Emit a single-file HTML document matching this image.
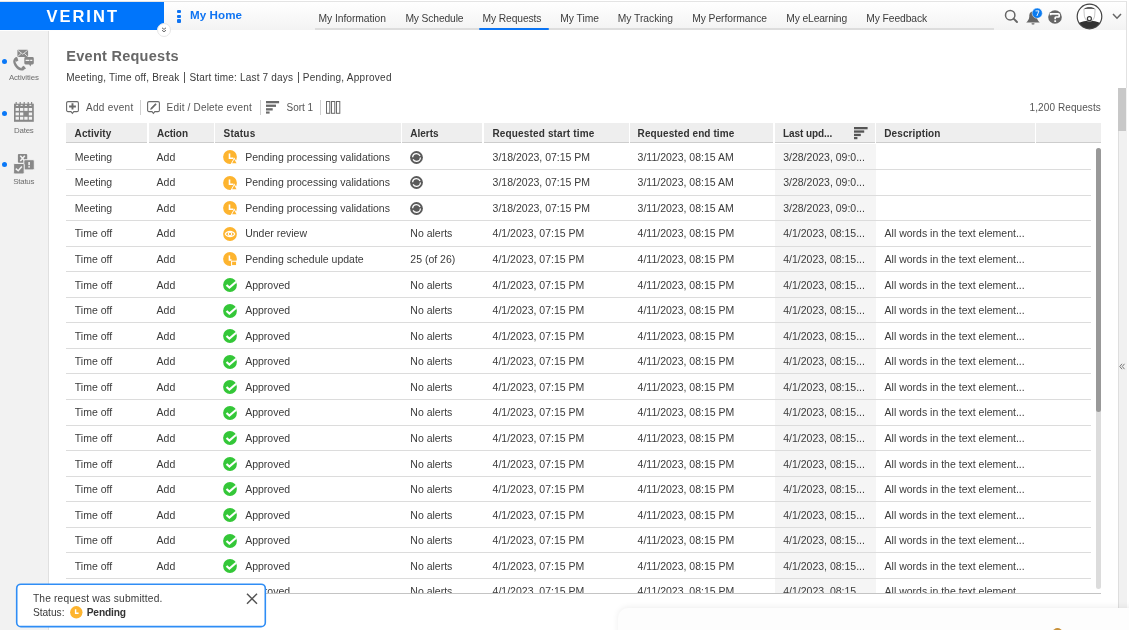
<!DOCTYPE html>
<html><head><meta charset="utf-8">
<style>
html,body{margin:0;padding:0;}
body{width:1129px;height:630px;overflow:hidden;position:relative;background:#fff;font-family:"Liberation Sans",sans-serif;}
.a{position:absolute;}
.t{position:absolute;white-space:pre;line-height:1;font-family:"Liberation Sans",sans-serif;}
.rb{position:absolute;left:66px;width:1025px;height:1px;background:#dcdcdc;}
.hc{position:absolute;top:123.3px;height:19px;background:#eeeeee;border-bottom:1px solid #cdcdcd;}
svg{position:absolute;overflow:visible;}
</style></head><body>
<div id="root" style="position:absolute;left:0;top:0;width:1129px;height:630px;overflow:hidden;will-change:transform">
<!-- top frame line -->
<div class="a" style="left:0;top:0;width:1129px;height:1px;background:#fff"></div>
<div class="a" style="left:0;top:1px;width:1127px;height:1px;background:#e4e4e4"></div>
<!-- header -->
<div class="a" style="left:0;top:2px;width:1126px;height:28px;background:linear-gradient(#ffffff,#f3f3f3)"></div>
<div class="a" style="left:0;top:2px;width:164px;height:28px;background:#0075fb"></div>
<!-- nav underline -->
<div class="a" style="left:315px;top:28px;width:679px;height:2px;background:#dddddd"></div>
<div class="a" style="left:479px;top:27.5px;width:70px;height:2.5px;background:#0a74f4;border-radius:1px"></div>
<!-- kebab -->
<div class="a" style="left:177px;top:9.5px;width:3.8px;height:3.6px;background:#0f74f2;border-radius:1px"></div>
<div class="a" style="left:177px;top:14.5px;width:3.8px;height:3.6px;background:#0f74f2;border-radius:1px"></div>
<div class="a" style="left:177px;top:19.3px;width:3.8px;height:3.6px;background:#0f74f2;border-radius:1px"></div>
<!-- right frame line -->
<div class="a" style="left:1126px;top:1px;width:1px;height:607px;background:#e2e2e2"></div>
<!-- sidebar -->
<div class="a" style="left:0;top:31px;width:48px;height:599px;background:#f2f2f2;border-right:1px solid #e0e0e0"></div>
<!-- collapse circle -->
<div class="a" style="left:157px;top:23px;width:12px;height:12px;border-radius:50%;background:#fff;border:1px solid #e6e6e6"></div>
<svg style="left:160px;top:26.3px" width="8" height="8" viewBox="0 0 8 8"><path d="M2 1.8 L4 3.4 L6 1.8 M2 4.2 L4 5.8 L6 4.2" fill="none" stroke="#555" stroke-width="0.9"/></svg>

<span class="t" style="left:46.40px;top:8.00px;font-size:16.5px;font-weight:700;color:#fff;letter-spacing:2.017px;">VERINT</span>
<span class="t" style="left:190.00px;top:9.00px;font-size:11.6px;font-weight:700;color:#0f74f2;letter-spacing:0.076px;">My Home</span>
<span class="t" style="left:318.60px;top:14.00px;font-size:10.3px;color:#3d3d3d;letter-spacing:-0.055px;">My Information</span>
<span class="t" style="left:405.40px;top:14.00px;font-size:10.3px;color:#3d3d3d;letter-spacing:-0.133px;">My Schedule</span>
<span class="t" style="left:482.50px;top:14.00px;font-size:10.3px;color:#3d3d3d;letter-spacing:-0.109px;">My Requests</span>
<span class="t" style="left:560.30px;top:14.00px;font-size:10.3px;color:#3d3d3d;letter-spacing:-0.051px;">My Time</span>
<span class="t" style="left:617.70px;top:14.00px;font-size:10.3px;color:#3d3d3d;letter-spacing:-0.022px;">My Tracking</span>
<span class="t" style="left:692.20px;top:14.00px;font-size:10.3px;color:#3d3d3d;letter-spacing:-0.057px;">My Performance</span>
<span class="t" style="left:786.30px;top:14.00px;font-size:10.3px;color:#3d3d3d;letter-spacing:-0.136px;">My eLearning</span>
<span class="t" style="left:866.20px;top:14.00px;font-size:10.3px;color:#3d3d3d;letter-spacing:-0.081px;">My Feedback</span>
<span class="t" style="left:66.30px;top:49.00px;font-size:14.5px;font-weight:700;color:#676767;letter-spacing:0.269px;">Event Requests</span>
<span class="t" style="left:66.30px;top:73.00px;font-size:10px;color:#3a3a3a;letter-spacing:0.204px;">Meeting, Time off, Break</span>
<span class="t" style="left:189.40px;top:73.00px;font-size:10px;color:#3a3a3a;letter-spacing:0.186px;">Start time: Last 7 days</span>
<span class="t" style="left:302.80px;top:73.00px;font-size:10px;color:#3a3a3a;letter-spacing:0.262px;">Pending, Approved</span>
<span class="t" style="left:8.90px;top:74.00px;font-size:7.9px;color:#6e6e6e;letter-spacing:-0.127px;">Activities</span>
<span class="t" style="left:14.00px;top:127.00px;font-size:7.9px;color:#6e6e6e;letter-spacing:-0.206px;">Dates</span>
<span class="t" style="left:13.20px;top:178.00px;font-size:7.9px;color:#6e6e6e;letter-spacing:-0.215px;">Status</span>
<span class="t" style="left:86.00px;top:103.00px;font-size:10px;color:#555;letter-spacing:0.269px;">Add event</span>
<span class="t" style="left:166.60px;top:103.00px;font-size:10px;color:#555;letter-spacing:0.193px;">Edit / Delete event</span>
<span class="t" style="left:286.60px;top:103.00px;font-size:10px;color:#555;letter-spacing:-0.058px;">Sort 1</span>
<span class="t" style="left:1029.60px;top:103.00px;font-size:10px;color:#555;letter-spacing:0.088px;">1,200 Requests</span>
<svg style="left:1003.00px;top:8.00px" width="16" height="16" viewBox="0 0 16 16"><circle cx="7.2" cy="7.2" r="4.7" fill="none" stroke="#666" stroke-width="1.5"/><path d="M10.6 10.6L14 14" stroke="#666" stroke-width="1.9" stroke-linecap="round"/></svg>
<svg style="left:1025.00px;top:9.00px" width="16" height="16" viewBox="0 0 16 16"><path d="M8 2.5C5 2.5 4.3 5 4.3 7.5C4.3 10.5 2.6 12 1.2 13.6H14.8C13.4 12 11.7 10.5 11.7 7.5C11.7 5 11 2.5 8 2.5Z" fill="#666"/><path d="M6.6 14.2H9.4V15C9.4 15.4 8.8 15.5 8 15.5C7.2 15.5 6.6 15.4 6.6 15Z" fill="#666"/></svg>
<svg style="left:1032.00px;top:7.80px" width="11" height="11" viewBox="0 0 11 11"><circle cx="5.2" cy="5.2" r="5.1" fill="#0a7bf0" stroke="#fff" stroke-width="0.5"/><path d="M3.5 2.9H7L4.9 8" fill="none" stroke="#fff" stroke-width="0.9"/></svg>
<svg style="left:1047.50px;top:9.90px" width="14" height="14" viewBox="0 0 14 14"><circle cx="7" cy="7" r="6.8" fill="#666"/><path d="M2.6 5.2V3.8H10.2Q11.2 3.8 11.2 4.8V6.2Q11.2 7 10.4 7H8Q7.2 7 7.2 7.8V9.2" fill="none" stroke="#fff" stroke-width="1.7"/><rect x="6.3" y="10.3" width="1.8" height="1.7" fill="#fff"/></svg>
<svg style="left:1076.00px;top:2.50px" width="27" height="27" viewBox="0 0 27 27"><defs><clipPath id="avc"><circle cx="13.5" cy="13.5" r="12.3"/></clipPath></defs><circle cx="13.5" cy="13.5" r="12.3" fill="#fff"/><g clip-path="url(#avc)"><path d="M0 22.8C3 16.2 24 16.2 27 22.8V28H0Z" fill="#333"/><path d="M7.9 6.2C7.9 4.2 19.1 4.2 19.1 6.2L18.7 12.2C18.3 16.2 16 18.6 13.5 18.6C11 18.6 8.7 16.2 8.3 12.2Z" fill="#fff" stroke="#8a8a8a" stroke-width="0.5"/><path d="M8.2 6.2C9.8 3.6 17.2 3.6 18.7 6.2C16.2 5.6 10.6 5.6 8.2 6.2Z" fill="#3a3a3a"/><circle cx="13.4" cy="15.7" r="2" fill="#fff" stroke="#3a3a3a" stroke-width="1.2"/></g><circle cx="13.5" cy="13.5" r="12.3" fill="none" stroke="#444" stroke-width="1.2"/></svg>
<svg style="left:1112.00px;top:13.00px" width="10" height="7" viewBox="0 0 10 7"><path d="M1 1L5 5.2L9 1" fill="none" stroke="#666" stroke-width="1.5"/></svg>
<svg style="left:66.00px;top:101.00px" width="13" height="13" viewBox="0 0 13 13"><path d="M2 0.6H11A1.4 1.4 0 0 1 12.4 2V9.2A1.4 1.4 0 0 1 11 10.6H7.8L6.4 12.3L5 10.6H2A1.4 1.4 0 0 1 0.6 9.2V2A1.4 1.4 0 0 1 2 0.6Z" fill="none" stroke="#6a6a6a" stroke-width="1.1"/><path d="M6.5 2.3V8.6M3.1 5.5H9.9" stroke="#6a6a6a" stroke-width="1.9"/></svg>
<svg style="left:146.80px;top:101.00px" width="13" height="13" viewBox="0 0 13 13"><path d="M2 0.6H11A1.4 1.4 0 0 1 12.4 2V9.2A1.4 1.4 0 0 1 11 10.6H7.8L6.4 12.3L5 10.6H2A1.4 1.4 0 0 1 0.6 9.2V2A1.4 1.4 0 0 1 2 0.6Z" fill="none" stroke="#6a6a6a" stroke-width="1.1"/><path d="M3.6 8.4L4 7L8.4 2.6L9.3 3.5L4.9 7.9Z" fill="#6a6a6a" stroke="#6a6a6a" stroke-width="0.6"/></svg>
<svg style="left:266.20px;top:101.30px" width="14" height="13" viewBox="0 0 14 13"><rect x="0" y="0" width="13.1" height="2.3" fill="#6a6a6a"/><rect x="0" y="3.6" width="10" height="2.3" fill="#6a6a6a"/><rect x="0" y="7.2" width="6.7" height="2.3" fill="#6a6a6a"/><rect x="0" y="10.5" width="3.6" height="2.1" fill="#6a6a6a"/></svg>
<svg style="left:326.00px;top:101.00px" width="15" height="13" viewBox="0 0 15 13"><rect x="0.5" y="0.5" width="3.3" height="11.8" fill="none" stroke="#6a6a6a" stroke-width="1"/><rect x="5.5" y="0.5" width="3.3" height="11.8" fill="none" stroke="#6a6a6a" stroke-width="1"/><rect x="10.5" y="0.5" width="3.3" height="11.8" fill="none" stroke="#6a6a6a" stroke-width="1"/></svg>
<div class="a" style="left:140.1px;top:100px;width:1px;height:15px;background:#d0d0d0"></div>
<div class="a" style="left:259.9px;top:100px;width:1px;height:15px;background:#d0d0d0"></div>
<div class="a" style="left:319.7px;top:100px;width:1px;height:15px;background:#d0d0d0"></div>
<div class="a" style="left:183.8px;top:72.4px;width:1px;height:11px;background:#555"></div>
<div class="a" style="left:297.8px;top:72.4px;width:1px;height:11px;background:#555"></div>
<div class="a" style="left:1.5px;top:59.2px;width:5px;height:5px;border-radius:50%;background:#0a78f7"></div>
<div class="a" style="left:1.5px;top:111.1px;width:5px;height:5px;border-radius:50%;background:#0a78f7"></div>
<div class="a" style="left:1.5px;top:161.9px;width:5px;height:5px;border-radius:50%;background:#0a78f7"></div>
<svg style="left:0;top:0" width="48" height="200" viewBox="0 0 48 200"><rect x="17.4" y="49.8" width="10.7" height="7.1" rx="0.8" fill="#888888"/><path d="M17.9 50.4L22.75 54.2L27.6 50.4M17.9 56.4L21.2 53.4M27.6 56.4L24.3 53.4" fill="none" stroke="#f2f2f2" stroke-width="0.8"/><path d="M25.6 57.1H32.4Q33.8 57.1 33.8 58.5V63.1Q33.8 64.5 32.4 64.5H31.3L30.3 66.4L29.2 64.5H25.6Q24.3 64.5 24.3 63.1V58.5Q24.3 57.1 25.6 57.1Z" fill="#888888"/><path d="M25.6 60.4H29.4M30.2 60.4H32.3" stroke="#f2f2f2" stroke-width="1.1"/><path d="M16.2 58.2C14 59.6 13.8 62.2 15.6 65C17.4 67.8 20.2 69.6 22.6 69.3" fill="none" stroke="#888888" stroke-width="2.4" stroke-linecap="round"/><path d="M14.6 58.4L17 57.2L18.4 60.6L16.2 61.8Z" fill="#888888"/><path d="M21.4 67.2L23.8 65.8L26 68.4L23.4 70Z" fill="#888888"/><rect x="14" y="103.7" width="19.8" height="18.1" fill="#888888"/><rect x="15.6" y="102" width="1.2" height="2.4" fill="#888888"/><rect x="19.6" y="102" width="1.2" height="2.4" fill="#888888"/><rect x="23.6" y="102" width="1.2" height="2.4" fill="#888888"/><rect x="27.6" y="102" width="1.2" height="2.4" fill="#888888"/><rect x="31.0" y="102" width="1.2" height="2.4" fill="#888888"/><rect x="16.2" y="104.9" width="2" height="1" fill="#f2f2f2"/><rect x="15.6" y="108" width="3.3" height="2.9" fill="#f2f2f2"/><rect x="15.6" y="112.5" width="3.3" height="2.9" fill="#f2f2f2"/><rect x="15.6" y="116.8" width="3.3" height="2.9" fill="#f2f2f2"/><rect x="20.6" y="104.9" width="2" height="1" fill="#f2f2f2"/><rect x="20.0" y="108" width="3.3" height="2.9" fill="#f2f2f2"/><rect x="20.0" y="112.5" width="3.3" height="2.9" fill="#f2f2f2"/><rect x="20.0" y="116.8" width="3.3" height="2.9" fill="#f2f2f2"/><rect x="24.9" y="104.9" width="2" height="1" fill="#f2f2f2"/><rect x="24.3" y="108" width="3.3" height="2.9" fill="#f2f2f2"/><rect x="24.3" y="116.8" width="3.3" height="2.9" fill="#f2f2f2"/><rect x="29.4" y="104.9" width="2" height="1" fill="#f2f2f2"/><rect x="28.8" y="108" width="3.3" height="2.9" fill="#f2f2f2"/><rect x="28.8" y="112.5" width="3.3" height="2.9" fill="#f2f2f2"/><rect x="28.8" y="116.8" width="3.3" height="2.9" fill="#f2f2f2"/><rect x="17.9" y="154.1" width="9.3" height="8.6" rx="1" fill="#888888"/><path d="M20.3 155.8L24.8 161M24.8 155.8L20.3 161" stroke="#f2f2f2" stroke-width="1.5"/><rect x="23.8" y="159.7" width="10.5" height="10.2" rx="1.2" fill="#888888" stroke="#f2f2f2" stroke-width="1"/><rect x="28.3" y="162" width="1.6" height="3.2" fill="#f2f2f2"/><rect x="28.3" y="166.1" width="1.6" height="1.5" fill="#f2f2f2"/><rect x="13.6" y="163.5" width="10.6" height="10.5" rx="1.2" fill="#888888" stroke="#f2f2f2" stroke-width="1"/><path d="M15.8 168.6L18.2 170.8L21.9 166.6" fill="none" stroke="#f2f2f2" stroke-width="1.5"/></svg>


<!-- table header cells -->
<div class="hc" style="left:66px;width:81px"></div>
<div class="hc" style="left:148.5px;width:65px"></div>
<div class="hc" style="left:215px;width:185.5px"></div>
<div class="hc" style="left:401.7px;width:80.8px"></div>
<div class="hc" style="left:484px;width:144.5px"></div>
<div class="hc" style="left:630px;width:143px"></div>
<div class="hc" style="left:775px;width:99.5px"></div>
<div class="hc" style="left:876px;width:158.5px"></div>
<div class="hc" style="left:1036px;width:65px"></div>

<span class="t" style="left:74.60px;top:129.00px;font-size:10px;font-weight:700;color:#333;letter-spacing:0.068px;">Activity</span>
<span class="t" style="left:157.10px;top:129.00px;font-size:10px;font-weight:700;color:#333;letter-spacing:-0.042px;">Action</span>
<span class="t" style="left:223.60px;top:129.00px;font-size:10px;font-weight:700;color:#333;letter-spacing:0.207px;">Status</span>
<span class="t" style="left:410.30px;top:129.00px;font-size:10px;font-weight:700;color:#333;">Alerts</span>
<span class="t" style="left:492.50px;top:129.00px;font-size:10px;font-weight:700;color:#333;letter-spacing:0.151px;">Requested start time</span>
<span class="t" style="left:637.60px;top:129.00px;font-size:10px;font-weight:700;color:#333;letter-spacing:0.098px;">Requested end time</span>
<span class="t" style="left:782.90px;top:129.00px;font-size:10px;font-weight:700;color:#333;letter-spacing:-0.070px;">Last upd...</span>
<span class="t" style="left:884.20px;top:129.00px;font-size:10px;font-weight:700;color:#333;letter-spacing:0.118px;">Description</span>
<svg style="left:854.30px;top:127.10px" width="14" height="13" viewBox="0 0 14 13"><rect x="0" y="0" width="13.6" height="2.3" fill="#555"/><rect x="0" y="3.4" width="10.2" height="2.3" fill="#555"/><rect x="0" y="6.8" width="6.8" height="2.3" fill="#555"/><rect x="0" y="10" width="3.4" height="2.2" fill="#555"/></svg>


<!-- table body -->
<div class="a" style="left:0;top:144px;width:1129px;height:449px;overflow:hidden">
 <div class="a" style="left:774.5px;top:0;width:101px;height:449px;background:#f5f5f5"></div>
 <div class="rb" style="top:25.00px"></div>
<div class="rb" style="top:50.56px"></div>
<div class="rb" style="top:76.12px"></div>
<div class="rb" style="top:101.68px"></div>
<div class="rb" style="top:127.24px"></div>
<div class="rb" style="top:152.80px"></div>
<div class="rb" style="top:178.36px"></div>
<div class="rb" style="top:203.92px"></div>
<div class="rb" style="top:229.48px"></div>
<div class="rb" style="top:255.04px"></div>
<div class="rb" style="top:280.60px"></div>
<div class="rb" style="top:306.16px"></div>
<div class="rb" style="top:331.72px"></div>
<div class="rb" style="top:357.28px"></div>
<div class="rb" style="top:382.84px"></div>
<div class="rb" style="top:408.40px"></div>
<div class="rb" style="top:433.96px"></div>

 <div class="a" style="left:0;top:-144px;width:1129px;height:630px">
 <span class="t" style="left:74.80px;top:152.00px;font-size:10.5px;color:#3b3b3b;">Meeting</span>
<span class="t" style="left:156.60px;top:152.00px;font-size:10.5px;color:#3b3b3b;">Add</span>
<span class="t" style="left:245.20px;top:152.00px;font-size:10.5px;color:#3b3b3b;">Pending processing validations</span>
<span class="t" style="left:492.60px;top:152.00px;font-size:10.5px;color:#3b3b3b;">3/18/2023, 07:15 PM</span>
<span class="t" style="left:637.60px;top:152.00px;font-size:10.5px;color:#3b3b3b;">3/11/2023, 08:15 AM</span>
<span class="t" style="left:783.20px;top:152.00px;font-size:10.5px;color:#3b3b3b;">3/28/2023, 09:0...</span>
<span class="t" style="left:74.80px;top:177.00px;font-size:10.5px;color:#3b3b3b;">Meeting</span>
<span class="t" style="left:156.60px;top:177.00px;font-size:10.5px;color:#3b3b3b;">Add</span>
<span class="t" style="left:245.20px;top:177.00px;font-size:10.5px;color:#3b3b3b;">Pending processing validations</span>
<span class="t" style="left:492.60px;top:177.00px;font-size:10.5px;color:#3b3b3b;">3/18/2023, 07:15 PM</span>
<span class="t" style="left:637.60px;top:177.00px;font-size:10.5px;color:#3b3b3b;">3/11/2023, 08:15 AM</span>
<span class="t" style="left:783.20px;top:177.00px;font-size:10.5px;color:#3b3b3b;">3/28/2023, 09:0...</span>
<span class="t" style="left:74.80px;top:203.00px;font-size:10.5px;color:#3b3b3b;">Meeting</span>
<span class="t" style="left:156.60px;top:203.00px;font-size:10.5px;color:#3b3b3b;">Add</span>
<span class="t" style="left:245.20px;top:203.00px;font-size:10.5px;color:#3b3b3b;">Pending processing validations</span>
<span class="t" style="left:492.60px;top:203.00px;font-size:10.5px;color:#3b3b3b;">3/18/2023, 07:15 PM</span>
<span class="t" style="left:637.60px;top:203.00px;font-size:10.5px;color:#3b3b3b;">3/11/2023, 08:15 AM</span>
<span class="t" style="left:783.20px;top:203.00px;font-size:10.5px;color:#3b3b3b;">3/28/2023, 09:0...</span>
<span class="t" style="left:74.80px;top:228.00px;font-size:10.5px;color:#3b3b3b;">Time off</span>
<span class="t" style="left:156.60px;top:228.00px;font-size:10.5px;color:#3b3b3b;">Add</span>
<span class="t" style="left:245.20px;top:228.00px;font-size:10.5px;color:#3b3b3b;">Under review</span>
<span class="t" style="left:410.30px;top:228.00px;font-size:10.5px;color:#3b3b3b;">No alerts</span>
<span class="t" style="left:492.60px;top:228.00px;font-size:10.5px;color:#3b3b3b;">4/1/2023, 07:15 PM</span>
<span class="t" style="left:637.60px;top:228.00px;font-size:10.5px;color:#3b3b3b;">4/11/2023, 08:15 PM</span>
<span class="t" style="left:783.20px;top:228.00px;font-size:10.5px;color:#3b3b3b;">4/1/2023, 08:15...</span>
<span class="t" style="left:884.60px;top:228.00px;font-size:10.5px;color:#3b3b3b;">All words in the text element...</span>
<span class="t" style="left:74.80px;top:254.00px;font-size:10.5px;color:#3b3b3b;">Time off</span>
<span class="t" style="left:156.60px;top:254.00px;font-size:10.5px;color:#3b3b3b;">Add</span>
<span class="t" style="left:245.20px;top:254.00px;font-size:10.5px;color:#3b3b3b;">Pending schedule update</span>
<span class="t" style="left:410.30px;top:254.00px;font-size:10.5px;color:#3b3b3b;">25 (of 26)</span>
<span class="t" style="left:492.60px;top:254.00px;font-size:10.5px;color:#3b3b3b;">4/1/2023, 07:15 PM</span>
<span class="t" style="left:637.60px;top:254.00px;font-size:10.5px;color:#3b3b3b;">4/11/2023, 08:15 PM</span>
<span class="t" style="left:783.20px;top:254.00px;font-size:10.5px;color:#3b3b3b;">4/1/2023, 08:15...</span>
<span class="t" style="left:884.60px;top:254.00px;font-size:10.5px;color:#3b3b3b;">All words in the text element...</span>
<span class="t" style="left:74.80px;top:280.00px;font-size:10.5px;color:#3b3b3b;">Time off</span>
<span class="t" style="left:156.60px;top:280.00px;font-size:10.5px;color:#3b3b3b;">Add</span>
<span class="t" style="left:245.20px;top:280.00px;font-size:10.5px;color:#3b3b3b;">Approved</span>
<span class="t" style="left:410.30px;top:280.00px;font-size:10.5px;color:#3b3b3b;">No alerts</span>
<span class="t" style="left:492.60px;top:280.00px;font-size:10.5px;color:#3b3b3b;">4/1/2023, 07:15 PM</span>
<span class="t" style="left:637.60px;top:280.00px;font-size:10.5px;color:#3b3b3b;">4/11/2023, 08:15 PM</span>
<span class="t" style="left:783.20px;top:280.00px;font-size:10.5px;color:#3b3b3b;">4/1/2023, 08:15...</span>
<span class="t" style="left:884.60px;top:280.00px;font-size:10.5px;color:#3b3b3b;">All words in the text element...</span>
<span class="t" style="left:74.80px;top:305.00px;font-size:10.5px;color:#3b3b3b;">Time off</span>
<span class="t" style="left:156.60px;top:305.00px;font-size:10.5px;color:#3b3b3b;">Add</span>
<span class="t" style="left:245.20px;top:305.00px;font-size:10.5px;color:#3b3b3b;">Approved</span>
<span class="t" style="left:410.30px;top:305.00px;font-size:10.5px;color:#3b3b3b;">No alerts</span>
<span class="t" style="left:492.60px;top:305.00px;font-size:10.5px;color:#3b3b3b;">4/1/2023, 07:15 PM</span>
<span class="t" style="left:637.60px;top:305.00px;font-size:10.5px;color:#3b3b3b;">4/11/2023, 08:15 PM</span>
<span class="t" style="left:783.20px;top:305.00px;font-size:10.5px;color:#3b3b3b;">4/1/2023, 08:15...</span>
<span class="t" style="left:884.60px;top:305.00px;font-size:10.5px;color:#3b3b3b;">All words in the text element...</span>
<span class="t" style="left:74.80px;top:331.00px;font-size:10.5px;color:#3b3b3b;">Time off</span>
<span class="t" style="left:156.60px;top:331.00px;font-size:10.5px;color:#3b3b3b;">Add</span>
<span class="t" style="left:245.20px;top:331.00px;font-size:10.5px;color:#3b3b3b;">Approved</span>
<span class="t" style="left:410.30px;top:331.00px;font-size:10.5px;color:#3b3b3b;">No alerts</span>
<span class="t" style="left:492.60px;top:331.00px;font-size:10.5px;color:#3b3b3b;">4/1/2023, 07:15 PM</span>
<span class="t" style="left:637.60px;top:331.00px;font-size:10.5px;color:#3b3b3b;">4/11/2023, 08:15 PM</span>
<span class="t" style="left:783.20px;top:331.00px;font-size:10.5px;color:#3b3b3b;">4/1/2023, 08:15...</span>
<span class="t" style="left:884.60px;top:331.00px;font-size:10.5px;color:#3b3b3b;">All words in the text element...</span>
<span class="t" style="left:74.80px;top:356.00px;font-size:10.5px;color:#3b3b3b;">Time off</span>
<span class="t" style="left:156.60px;top:356.00px;font-size:10.5px;color:#3b3b3b;">Add</span>
<span class="t" style="left:245.20px;top:356.00px;font-size:10.5px;color:#3b3b3b;">Approved</span>
<span class="t" style="left:410.30px;top:356.00px;font-size:10.5px;color:#3b3b3b;">No alerts</span>
<span class="t" style="left:492.60px;top:356.00px;font-size:10.5px;color:#3b3b3b;">4/1/2023, 07:15 PM</span>
<span class="t" style="left:637.60px;top:356.00px;font-size:10.5px;color:#3b3b3b;">4/11/2023, 08:15 PM</span>
<span class="t" style="left:783.20px;top:356.00px;font-size:10.5px;color:#3b3b3b;">4/1/2023, 08:15...</span>
<span class="t" style="left:884.60px;top:356.00px;font-size:10.5px;color:#3b3b3b;">All words in the text element...</span>
<span class="t" style="left:74.80px;top:382.00px;font-size:10.5px;color:#3b3b3b;">Time off</span>
<span class="t" style="left:156.60px;top:382.00px;font-size:10.5px;color:#3b3b3b;">Add</span>
<span class="t" style="left:245.20px;top:382.00px;font-size:10.5px;color:#3b3b3b;">Approved</span>
<span class="t" style="left:410.30px;top:382.00px;font-size:10.5px;color:#3b3b3b;">No alerts</span>
<span class="t" style="left:492.60px;top:382.00px;font-size:10.5px;color:#3b3b3b;">4/1/2023, 07:15 PM</span>
<span class="t" style="left:637.60px;top:382.00px;font-size:10.5px;color:#3b3b3b;">4/11/2023, 08:15 PM</span>
<span class="t" style="left:783.20px;top:382.00px;font-size:10.5px;color:#3b3b3b;">4/1/2023, 08:15...</span>
<span class="t" style="left:884.60px;top:382.00px;font-size:10.5px;color:#3b3b3b;">All words in the text element...</span>
<span class="t" style="left:74.80px;top:407.00px;font-size:10.5px;color:#3b3b3b;">Time off</span>
<span class="t" style="left:156.60px;top:407.00px;font-size:10.5px;color:#3b3b3b;">Add</span>
<span class="t" style="left:245.20px;top:407.00px;font-size:10.5px;color:#3b3b3b;">Approved</span>
<span class="t" style="left:410.30px;top:407.00px;font-size:10.5px;color:#3b3b3b;">No alerts</span>
<span class="t" style="left:492.60px;top:407.00px;font-size:10.5px;color:#3b3b3b;">4/1/2023, 07:15 PM</span>
<span class="t" style="left:637.60px;top:407.00px;font-size:10.5px;color:#3b3b3b;">4/11/2023, 08:15 PM</span>
<span class="t" style="left:783.20px;top:407.00px;font-size:10.5px;color:#3b3b3b;">4/1/2023, 08:15...</span>
<span class="t" style="left:884.60px;top:407.00px;font-size:10.5px;color:#3b3b3b;">All words in the text element...</span>
<span class="t" style="left:74.80px;top:433.00px;font-size:10.5px;color:#3b3b3b;">Time off</span>
<span class="t" style="left:156.60px;top:433.00px;font-size:10.5px;color:#3b3b3b;">Add</span>
<span class="t" style="left:245.20px;top:433.00px;font-size:10.5px;color:#3b3b3b;">Approved</span>
<span class="t" style="left:410.30px;top:433.00px;font-size:10.5px;color:#3b3b3b;">No alerts</span>
<span class="t" style="left:492.60px;top:433.00px;font-size:10.5px;color:#3b3b3b;">4/1/2023, 07:15 PM</span>
<span class="t" style="left:637.60px;top:433.00px;font-size:10.5px;color:#3b3b3b;">4/11/2023, 08:15 PM</span>
<span class="t" style="left:783.20px;top:433.00px;font-size:10.5px;color:#3b3b3b;">4/1/2023, 08:15...</span>
<span class="t" style="left:884.60px;top:433.00px;font-size:10.5px;color:#3b3b3b;">All words in the text element...</span>
<span class="t" style="left:74.80px;top:459.00px;font-size:10.5px;color:#3b3b3b;">Time off</span>
<span class="t" style="left:156.60px;top:459.00px;font-size:10.5px;color:#3b3b3b;">Add</span>
<span class="t" style="left:245.20px;top:459.00px;font-size:10.5px;color:#3b3b3b;">Approved</span>
<span class="t" style="left:410.30px;top:459.00px;font-size:10.5px;color:#3b3b3b;">No alerts</span>
<span class="t" style="left:492.60px;top:459.00px;font-size:10.5px;color:#3b3b3b;">4/1/2023, 07:15 PM</span>
<span class="t" style="left:637.60px;top:459.00px;font-size:10.5px;color:#3b3b3b;">4/11/2023, 08:15 PM</span>
<span class="t" style="left:783.20px;top:459.00px;font-size:10.5px;color:#3b3b3b;">4/1/2023, 08:15...</span>
<span class="t" style="left:884.60px;top:459.00px;font-size:10.5px;color:#3b3b3b;">All words in the text element...</span>
<span class="t" style="left:74.80px;top:484.00px;font-size:10.5px;color:#3b3b3b;">Time off</span>
<span class="t" style="left:156.60px;top:484.00px;font-size:10.5px;color:#3b3b3b;">Add</span>
<span class="t" style="left:245.20px;top:484.00px;font-size:10.5px;color:#3b3b3b;">Approved</span>
<span class="t" style="left:410.30px;top:484.00px;font-size:10.5px;color:#3b3b3b;">No alerts</span>
<span class="t" style="left:492.60px;top:484.00px;font-size:10.5px;color:#3b3b3b;">4/1/2023, 07:15 PM</span>
<span class="t" style="left:637.60px;top:484.00px;font-size:10.5px;color:#3b3b3b;">4/11/2023, 08:15 PM</span>
<span class="t" style="left:783.20px;top:484.00px;font-size:10.5px;color:#3b3b3b;">4/1/2023, 08:15...</span>
<span class="t" style="left:884.60px;top:484.00px;font-size:10.5px;color:#3b3b3b;">All words in the text element...</span>
<span class="t" style="left:74.80px;top:510.00px;font-size:10.5px;color:#3b3b3b;">Time off</span>
<span class="t" style="left:156.60px;top:510.00px;font-size:10.5px;color:#3b3b3b;">Add</span>
<span class="t" style="left:245.20px;top:510.00px;font-size:10.5px;color:#3b3b3b;">Approved</span>
<span class="t" style="left:410.30px;top:510.00px;font-size:10.5px;color:#3b3b3b;">No alerts</span>
<span class="t" style="left:492.60px;top:510.00px;font-size:10.5px;color:#3b3b3b;">4/1/2023, 07:15 PM</span>
<span class="t" style="left:637.60px;top:510.00px;font-size:10.5px;color:#3b3b3b;">4/11/2023, 08:15 PM</span>
<span class="t" style="left:783.20px;top:510.00px;font-size:10.5px;color:#3b3b3b;">4/1/2023, 08:15...</span>
<span class="t" style="left:884.60px;top:510.00px;font-size:10.5px;color:#3b3b3b;">All words in the text element...</span>
<span class="t" style="left:74.80px;top:535.00px;font-size:10.5px;color:#3b3b3b;">Time off</span>
<span class="t" style="left:156.60px;top:535.00px;font-size:10.5px;color:#3b3b3b;">Add</span>
<span class="t" style="left:245.20px;top:535.00px;font-size:10.5px;color:#3b3b3b;">Approved</span>
<span class="t" style="left:410.30px;top:535.00px;font-size:10.5px;color:#3b3b3b;">No alerts</span>
<span class="t" style="left:492.60px;top:535.00px;font-size:10.5px;color:#3b3b3b;">4/1/2023, 07:15 PM</span>
<span class="t" style="left:637.60px;top:535.00px;font-size:10.5px;color:#3b3b3b;">4/11/2023, 08:15 PM</span>
<span class="t" style="left:783.20px;top:535.00px;font-size:10.5px;color:#3b3b3b;">4/1/2023, 08:15...</span>
<span class="t" style="left:884.60px;top:535.00px;font-size:10.5px;color:#3b3b3b;">All words in the text element...</span>
<span class="t" style="left:74.80px;top:561.00px;font-size:10.5px;color:#3b3b3b;">Time off</span>
<span class="t" style="left:156.60px;top:561.00px;font-size:10.5px;color:#3b3b3b;">Add</span>
<span class="t" style="left:245.20px;top:561.00px;font-size:10.5px;color:#3b3b3b;">Approved</span>
<span class="t" style="left:410.30px;top:561.00px;font-size:10.5px;color:#3b3b3b;">No alerts</span>
<span class="t" style="left:492.60px;top:561.00px;font-size:10.5px;color:#3b3b3b;">4/1/2023, 07:15 PM</span>
<span class="t" style="left:637.60px;top:561.00px;font-size:10.5px;color:#3b3b3b;">4/11/2023, 08:15 PM</span>
<span class="t" style="left:783.20px;top:561.00px;font-size:10.5px;color:#3b3b3b;">4/1/2023, 08:15...</span>
<span class="t" style="left:884.60px;top:561.00px;font-size:10.5px;color:#3b3b3b;">All words in the text element...</span>
<span class="t" style="left:74.80px;top:586.00px;font-size:10.5px;color:#3b3b3b;">Time off</span>
<span class="t" style="left:156.60px;top:586.00px;font-size:10.5px;color:#3b3b3b;">Add</span>
<span class="t" style="left:245.20px;top:586.00px;font-size:10.5px;color:#3b3b3b;">Approved</span>
<span class="t" style="left:410.30px;top:586.00px;font-size:10.5px;color:#3b3b3b;">No alerts</span>
<span class="t" style="left:492.60px;top:586.00px;font-size:10.5px;color:#3b3b3b;">4/1/2023, 07:15 PM</span>
<span class="t" style="left:637.60px;top:586.00px;font-size:10.5px;color:#3b3b3b;">4/11/2023, 08:15 PM</span>
<span class="t" style="left:783.20px;top:586.00px;font-size:10.5px;color:#3b3b3b;">4/1/2023, 08:15...</span>
<span class="t" style="left:884.60px;top:586.00px;font-size:10.5px;color:#3b3b3b;">All words in the text element...</span>

 <svg style="left:223.00px;top:150.20px" width="14" height="14" viewBox="0 0 14 14"><circle cx="7" cy="7" r="6.9" fill="#fdb42f"/><path d="M6.5 3.5V8.2H10.4" fill="none" stroke="#fff" stroke-width="1.6"/><path d="M11.3 7.4L7.6 14.2H15Z" fill="#fff"/><path d="M11.3 9.2L9.1 13.3H13.5Z" fill="#fdb42f"/></svg>
<svg style="left:410.00px;top:150.50px" width="13" height="13" viewBox="0 0 13 13"><circle cx="6.5" cy="6.5" r="6.4" fill="#5a5a5a"/><circle cx="6.5" cy="6.5" r="3.9" fill="none" stroke="#fff" stroke-width="1.3" stroke-dasharray="10 2.25"/><circle cx="6.5" cy="6.6" r="2.2" fill="#5a5a5a"/></svg>
<svg style="left:223.00px;top:175.76px" width="14" height="14" viewBox="0 0 14 14"><circle cx="7" cy="7" r="6.9" fill="#fdb42f"/><path d="M6.5 3.5V8.2H10.4" fill="none" stroke="#fff" stroke-width="1.6"/><path d="M11.3 7.4L7.6 14.2H15Z" fill="#fff"/><path d="M11.3 9.2L9.1 13.3H13.5Z" fill="#fdb42f"/></svg>
<svg style="left:410.00px;top:176.06px" width="13" height="13" viewBox="0 0 13 13"><circle cx="6.5" cy="6.5" r="6.4" fill="#5a5a5a"/><circle cx="6.5" cy="6.5" r="3.9" fill="none" stroke="#fff" stroke-width="1.3" stroke-dasharray="10 2.25"/><circle cx="6.5" cy="6.6" r="2.2" fill="#5a5a5a"/></svg>
<svg style="left:223.00px;top:201.32px" width="14" height="14" viewBox="0 0 14 14"><circle cx="7" cy="7" r="6.9" fill="#fdb42f"/><path d="M6.5 3.5V8.2H10.4" fill="none" stroke="#fff" stroke-width="1.6"/><path d="M11.3 7.4L7.6 14.2H15Z" fill="#fff"/><path d="M11.3 9.2L9.1 13.3H13.5Z" fill="#fdb42f"/></svg>
<svg style="left:410.00px;top:201.62px" width="13" height="13" viewBox="0 0 13 13"><circle cx="6.5" cy="6.5" r="6.4" fill="#5a5a5a"/><circle cx="6.5" cy="6.5" r="3.9" fill="none" stroke="#fff" stroke-width="1.3" stroke-dasharray="10 2.25"/><circle cx="6.5" cy="6.6" r="2.2" fill="#5a5a5a"/></svg>
<svg style="left:223.00px;top:226.88px" width="14" height="14" viewBox="0 0 14 14"><circle cx="7" cy="7" r="6.9" fill="#fdb42f"/><path d="M1.6 7C4 2.6 10 2.6 12.4 7C10 11.4 4 11.4 1.6 7Z" fill="#fff"/><path d="M2.9 7C5 4.3 9 4.3 11.1 7C9 9.7 5 9.7 2.9 7Z" fill="#fdb42f"/><circle cx="7" cy="7" r="1.7" fill="none" stroke="#fff" stroke-width="1.1"/></svg>
<svg style="left:223.00px;top:252.44px" width="14" height="14" viewBox="0 0 14 14"><circle cx="7" cy="7" r="6.9" fill="#fdb42f"/><path d="M6.4 3.6V8.1H8.5" fill="none" stroke="#fff" stroke-width="1.5"/><rect x="8.6" y="9.2" width="5" height="4.4" fill="#fdb42f" stroke="#fff" stroke-width="1"/></svg>
<svg style="left:223.00px;top:278.00px" width="14" height="14" viewBox="0 0 14 14"><circle cx="7" cy="7" r="6.9" fill="#34c738"/><path d="M3.5 6.9L6.4 9.6L13.2 3.7" fill="none" stroke="#fff" stroke-width="2.1"/></svg>
<svg style="left:223.00px;top:303.56px" width="14" height="14" viewBox="0 0 14 14"><circle cx="7" cy="7" r="6.9" fill="#34c738"/><path d="M3.5 6.9L6.4 9.6L13.2 3.7" fill="none" stroke="#fff" stroke-width="2.1"/></svg>
<svg style="left:223.00px;top:329.12px" width="14" height="14" viewBox="0 0 14 14"><circle cx="7" cy="7" r="6.9" fill="#34c738"/><path d="M3.5 6.9L6.4 9.6L13.2 3.7" fill="none" stroke="#fff" stroke-width="2.1"/></svg>
<svg style="left:223.00px;top:354.68px" width="14" height="14" viewBox="0 0 14 14"><circle cx="7" cy="7" r="6.9" fill="#34c738"/><path d="M3.5 6.9L6.4 9.6L13.2 3.7" fill="none" stroke="#fff" stroke-width="2.1"/></svg>
<svg style="left:223.00px;top:380.24px" width="14" height="14" viewBox="0 0 14 14"><circle cx="7" cy="7" r="6.9" fill="#34c738"/><path d="M3.5 6.9L6.4 9.6L13.2 3.7" fill="none" stroke="#fff" stroke-width="2.1"/></svg>
<svg style="left:223.00px;top:405.80px" width="14" height="14" viewBox="0 0 14 14"><circle cx="7" cy="7" r="6.9" fill="#34c738"/><path d="M3.5 6.9L6.4 9.6L13.2 3.7" fill="none" stroke="#fff" stroke-width="2.1"/></svg>
<svg style="left:223.00px;top:431.36px" width="14" height="14" viewBox="0 0 14 14"><circle cx="7" cy="7" r="6.9" fill="#34c738"/><path d="M3.5 6.9L6.4 9.6L13.2 3.7" fill="none" stroke="#fff" stroke-width="2.1"/></svg>
<svg style="left:223.00px;top:456.92px" width="14" height="14" viewBox="0 0 14 14"><circle cx="7" cy="7" r="6.9" fill="#34c738"/><path d="M3.5 6.9L6.4 9.6L13.2 3.7" fill="none" stroke="#fff" stroke-width="2.1"/></svg>
<svg style="left:223.00px;top:482.48px" width="14" height="14" viewBox="0 0 14 14"><circle cx="7" cy="7" r="6.9" fill="#34c738"/><path d="M3.5 6.9L6.4 9.6L13.2 3.7" fill="none" stroke="#fff" stroke-width="2.1"/></svg>
<svg style="left:223.00px;top:508.04px" width="14" height="14" viewBox="0 0 14 14"><circle cx="7" cy="7" r="6.9" fill="#34c738"/><path d="M3.5 6.9L6.4 9.6L13.2 3.7" fill="none" stroke="#fff" stroke-width="2.1"/></svg>
<svg style="left:223.00px;top:533.60px" width="14" height="14" viewBox="0 0 14 14"><circle cx="7" cy="7" r="6.9" fill="#34c738"/><path d="M3.5 6.9L6.4 9.6L13.2 3.7" fill="none" stroke="#fff" stroke-width="2.1"/></svg>
<svg style="left:223.00px;top:559.16px" width="14" height="14" viewBox="0 0 14 14"><circle cx="7" cy="7" r="6.9" fill="#34c738"/><path d="M3.5 6.9L6.4 9.6L13.2 3.7" fill="none" stroke="#fff" stroke-width="2.1"/></svg>
<svg style="left:223.00px;top:584.72px" width="14" height="14" viewBox="0 0 14 14"><circle cx="7" cy="7" r="6.9" fill="#34c738"/><path d="M3.5 6.9L6.4 9.6L13.2 3.7" fill="none" stroke="#fff" stroke-width="2.1"/></svg>

 </div>
</div>
<div class="a" style="left:66px;top:593px;width:1035px;height:1px;background:#c4c4c4"></div>
<!-- inner scrollbar -->
<div class="a" style="left:1095.5px;top:148px;width:5.5px;height:441px;background:#dcdcdc;border-radius:3px"></div>
<div class="a" style="left:1095.5px;top:148px;width:5.5px;height:264px;background:#999;border-radius:3px"></div>
<!-- outer scrollbar / right panel -->
<div class="a" style="left:1118px;top:88px;width:8px;height:520px;background:#f1f1f1;border-left:1px solid #dedede"></div>
<div class="a" style="left:1118px;top:88px;width:8px;height:43px;background:#c8c8c8"></div>
<svg style="left:1119px;top:363px" width="6" height="7" viewBox="0 0 6 7"><path d="M3 0.8 L0.8 3.5 L3 6.2 M5.5 0.8 L3.3 3.5 L5.5 6.2" fill="none" stroke="#777" stroke-width="1"/></svg>

<!-- bottom area -->
<div class="a" style="left:618px;top:608px;width:560px;height:60px;border-radius:10px;background:#fdfdfd;box-shadow:0 -1px 6px rgba(0,0,0,0.07)"></div>
<div class="a" style="left:1052.5px;top:628px;width:9px;height:9px;border-radius:50%;background:#c8913a"></div>

<svg style="left:0;top:570px" width="300" height="60" viewBox="0 570 300 60"><rect x="16.7" y="584.2" width="248.6" height="42.4" rx="4.2" fill="#fff" stroke="#2f8df5" stroke-width="1.6"/></svg>
<span class="t" style="left:32.90px;top:594.00px;font-size:10.2px;color:#3a3a3a;letter-spacing:0.174px;">The request was submitted.</span>
<span class="t" style="left:32.90px;top:608.00px;font-size:10.2px;color:#3a3a3a;letter-spacing:-0.020px;">Status:</span>
<span class="t" style="left:86.70px;top:608.00px;font-size:10.2px;font-weight:700;color:#333;letter-spacing:-0.131px;">Pending</span>
<svg style="left:70.20px;top:606.20px" width="12.6" height="12.6" viewBox="0 0 12.6 12.6"><circle cx="6.3" cy="6.3" r="6.2" fill="#fdb42f"/><path d="M5.6 3.2V7.2H8.6" fill="none" stroke="#fff" stroke-width="1.4"/></svg>
<svg style="left:245.50px;top:592.50px" width="12" height="11.5" viewBox="0 0 12 11.5"><path d="M1 0.8L11 10.7M11 0.8L1 10.7" stroke="#555" stroke-width="1.5"/></svg>

</div>
</body></html>
